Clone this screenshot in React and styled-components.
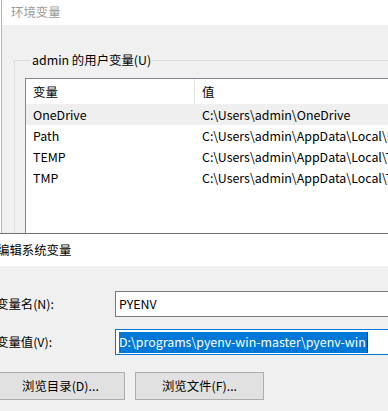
import React from 'react'
import styled, { createGlobalStyle } from 'styled-components'

const GlobalStyle = createGlobalStyle`
  html, body {
    margin: 0;
    padding: 0;
    background: #f0f0f0;
  }
  body {
    font-family: "Noto Sans CJK SC", sans-serif;
    font-size: 12.4px;
    color: #000;
  }
`

const Screen = styled.div`
  width: 388px;
  height: 411px;
  overflow: hidden;
  display: flex;
  flex-direction: column;
  background: #fff;
`

const BackWindow = styled.div`
  height: 233px;
  flex: none;
  margin-left: 1px;
  border-left: 1px solid #b4b4b4;
  display: flex;
  flex-direction: column;
  overflow: hidden;
`

const TitleBar = styled.div`
  flex: none;
  height: ${p => p.$h}px;
  line-height: ${p => p.$h}px;
  background: #fff;
  padding-left: ${p => p.$pad}px;
  color: ${p => (p.$inactive ? '#9a9a9a' : '#000')};
  white-space: nowrap;
`

const WindowBody = styled.div`
  flex: 1;
  background: #f0f0f0;
  padding: 35px 0 0 12px;
  overflow: hidden;
`

const Group = styled.fieldset`
  margin: 0;
  width: 420px;
  height: 200px;
  padding: 9px 0 0 10px;
  border: 1px solid #dcdcdc;
  border-right: none;
  border-bottom: none;
  position: relative;
  top: -9px;
  box-sizing: border-box;
`

const Legend = styled.legend`
  padding: 0 1px 0 1px;
  margin-left: 6px;
  line-height: 18px;
`

const List = styled.div`
  width: 400px;
  height: 200px;
  background: #fff;
  border: 1px solid #828790;
  border-right: none;
  box-sizing: border-box;
`

const Row = styled.div`
  display: grid;
  grid-template-columns: 169px 1fr;
  height: ${p => (p.$header ? 25 : 21)}px;
  align-items: center;
  background: ${p => (p.$selected ? '#efefef' : '#fff')};
  white-space: nowrap;
`

const Cell = styled.div`
  padding-left: 7px;
  height: 100%;
  display: flex;
  align-items: center;
  border-right: ${p => (p.$divider ? '1px solid #e5e5e5' : 'none')};
  overflow: hidden;
`

const Dialog = styled.div`
  flex: 1;
  border-top: 1px solid #707070;
  display: flex;
  flex-direction: column;
  margin-left: -4px;
  background: #f0f0f0;
`

const DialogBody = styled.div`
  flex: 1;
  padding-top: 25px;
  display: grid;
  grid-template-columns: 119px 1fr;
  row-gap: 12px;
  align-content: start;
`

const Label = styled.div`
  display: flex;
  align-items: center;
  white-space: nowrap;
`

const Field = styled.div`
  height: 26px;
  box-sizing: border-box;
  border: 1px solid ${p => (p.$focused ? '#0078d7' : '#7a7a7a')};
  border-right: none;
  background: #fff;
  display: flex;
  align-items: center;
  padding-left: 3px;
  white-space: nowrap;
  width: 300px;
`

const Selection = styled.span`
  background: #0078d7;
  color: #fff;
  line-height: 21px;
  padding-right: 1px;
  border-right: 1px solid #333;
`

const ButtonRow = styled.div`
  grid-column: 1 / -1;
  display: flex;
  gap: 10px;
  margin-top: 5px;
`

const Button = styled.div`
  width: 129px;
  height: 28px;
  box-sizing: border-box;
  border: 1px solid #adadad;
  background: #e1e1e1;
  display: flex;
  align-items: center;
  justify-content: center;
  white-space: nowrap;
`

const vars = [
  ['OneDrive', 'C:\\Users\\admin\\OneDrive'],
  ['Path', 'C:\\Users\\admin\\AppData\\Local\\Microsoft\\WindowsApps'],
  ['TEMP', 'C:\\Users\\admin\\AppData\\Local\\Temp'],
  ['TMP', 'C:\\Users\\admin\\AppData\\Local\\Temp'],
]

export default function App() {
  return (
    <>
      <GlobalStyle />
      <Screen>
        <BackWindow>
          <TitleBar $h={25} $pad={9} $inactive>环境变量</TitleBar>
          <WindowBody>
            <Group>
              <Legend>admin 的用户变量(U)</Legend>
              <List>
                <Row $header>
                  <Cell $divider>变量</Cell>
                  <Cell>值</Cell>
                </Row>
                {vars.map(([name, value], i) => (
                  <Row key={name} $selected={i === 0}>
                    <Cell>{name}</Cell>
                    <Cell>{value}</Cell>
                  </Row>
                ))}
              </List>
            </Group>
          </WindowBody>
        </BackWindow>
        <Dialog>
          <TitleBar $h={32} $pad={1}>编辑系统变量</TitleBar>
          <DialogBody>
            <Label>变量名(N):</Label>
            <Field>PYENV</Field>
            <Label>变量值(V):</Label>
            <Field $focused>
              <Selection>D:\programs\pyenv-win-master\pyenv-win</Selection>
            </Field>
            <ButtonRow>
              <Button>浏览目录(D)...</Button>
              <Button>浏览文件(F)...</Button>
            </ButtonRow>
          </DialogBody>
        </Dialog>
      </Screen>
    </>
  )
}
